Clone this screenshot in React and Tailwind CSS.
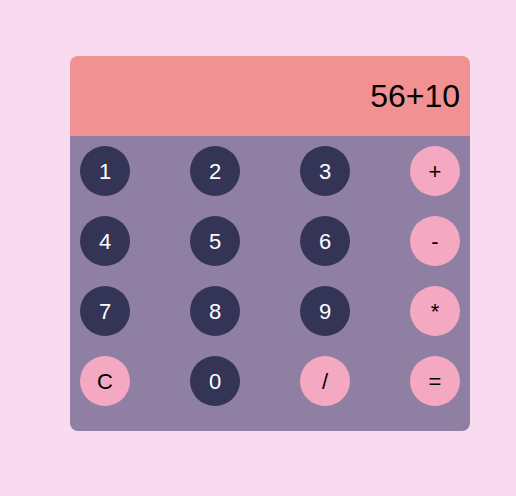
export default function App() {
  const keys = [
    ["1", "n"], ["2", "n"], ["3", "n"], ["+", "o"],
    ["4", "n"], ["5", "n"], ["6", "n"], ["-", "o"],
    ["7", "n"], ["8", "n"], ["9", "n"], ["*", "o"],
    ["C", "o"], ["0", "n"], ["/", "o"], ["=", "o"],
  ];

  return (
    <div
      className="w-[516px] h-[496px] bg-[#f8dbf0] pt-[56px] pl-[70px]"
      style={{ fontFamily: '"Liberation Sans", Arial, sans-serif' }}
    >
      <div className="w-[400px] rounded-lg overflow-hidden">
        {/* Display */}
        <div className="h-[80px] bg-[#f29191] flex items-center justify-end pr-[10px] text-[32px] text-black">
          56+10
        </div>

        {/* Keypad */}
        <div className="bg-[#8f7fa3] grid grid-cols-[repeat(4,50px)] gap-x-[60px] gap-y-[20px] px-[10px] pt-[10px] pb-[25px]">
          {keys.map(([k, t]) => (
            <button
              key={k}
              className={
                t === "n"
                  ? "w-[50px] h-[50px] rounded-full bg-[#333456] text-white text-[22px] flex items-center justify-center"
                  : "w-[50px] h-[50px] rounded-full bg-[#f4a8c2] text-black text-[22px] flex items-center justify-center"
              }
            >
              {k}
            </button>
          ))}
        </div>
      </div>
    </div>
  );
}
